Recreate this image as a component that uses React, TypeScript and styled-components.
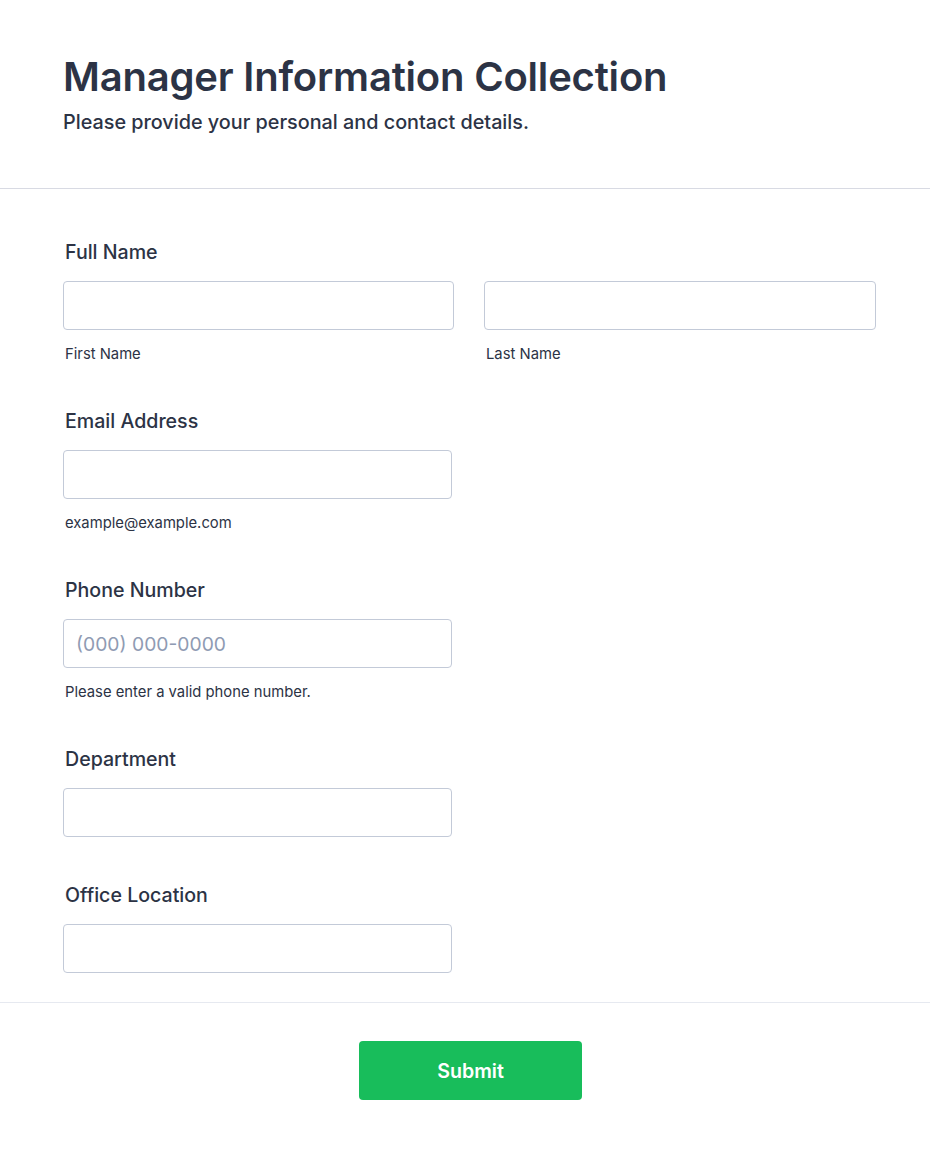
import React from 'react';
import styled, { createGlobalStyle } from 'styled-components';

const GlobalStyle = createGlobalStyle`
  html, body {
    margin: 0;
    padding: 0;
    background: #ffffff;
    font-family: 'Inter', 'Noto Sans', sans-serif;
    color: #2c3345;
  }
  * { box-sizing: border-box; }
`;

const Page = styled.form`
  width: 930px;
  background: #ffffff;
`;

const Header = styled.header`
  padding: 52px 54px 0 63px;
  height: 189px;
  border-bottom: 1px solid #d8dae3;
`;

const Title = styled.h1`
  margin: 0;
  font-size: 40px;
  line-height: 50px;
  font-weight: 600;
  letter-spacing: -0.2px;
  color: #2c3345;
`;

const Subtitle = styled.p`
  margin: 8px 0 0;
  font-size: 19.8px;
  line-height: 24px;
  font-weight: 500;
  color: #2c3345;
`;

const Fields = styled.div`
  padding: 51px 54px 7px 63px;
  display: flex;
  flex-direction: column;
  border-bottom: 1px solid #e6e9f0;
`;

const Field = styled.div`
  display: flex;
  flex-direction: column;
  padding-bottom: 46px;
  &:last-child { padding-bottom: 22px; }
`;

const Label = styled.label`
  padding-left: 2px;
  font-size: 19.6px;
  line-height: 24px;
  font-weight: 500;
  color: #2c3345;
  margin-bottom: 17px;
`;

const Row = styled.div`
  display: grid;
  grid-template-columns: 1fr 1fr;
  column-gap: 30px;
`;

const Single = styled.div<{ $width?: number }>`
  width: ${p => p.$width ?? 389}px;
  display: flex;
  flex-direction: column;
`;

const Input = styled.input`
  height: 49px;
  width: 100%;
  border: 1px solid #c3cad8;
  border-radius: 4px;
  padding: 0 12px;
  font-family: 'Inter', sans-serif;
  font-size: 19.3px;
  color: #2c3345;
  background: #ffffff;
  outline: none;
  &::placeholder { color: #8f9bb3; }
`;

const Sub = styled.span`
  margin-top: 15px;
  padding-left: 2px;
  font-size: 14.8px;
  line-height: 18px;
  color: #2c3345;
`;

const Footer = styled.div`
  padding: 38px 0 49px 11px;
  display: flex;
  justify-content: center;
`;

const SubmitButton = styled.button`
  width: 223px;
  height: 59px;
  border: none;
  border-radius: 4px;
  background: #18bd5b;
  color: #ffffff;
  font-family: 'Inter', sans-serif;
  font-size: 19.6px;
  font-weight: 600;
  cursor: pointer;
`;

const App: React.FC = () => (
  <>
    <GlobalStyle />
    <Page onSubmit={e => e.preventDefault()}>
      <Header>
        <Title>Manager Information Collection</Title>
        <Subtitle>Please provide your personal and contact details.</Subtitle>
      </Header>
      <Fields>
        <Field>
          <Label>Full Name</Label>
          <Row>
            <Single $width={391}>
              <Input type="text" />
              <Sub>First Name</Sub>
            </Single>
            <Single $width={392}>
              <Input type="text" />
              <Sub>Last Name</Sub>
            </Single>
          </Row>
        </Field>
        <Field>
          <Label>Email Address</Label>
          <Single>
            <Input type="email" />
            <Sub>example@example.com</Sub>
          </Single>
        </Field>
        <Field>
          <Label>Phone Number</Label>
          <Single>
            <Input type="tel" placeholder="(000) 000-0000" />
            <Sub>Please enter a valid phone number.</Sub>
          </Single>
        </Field>
        <Field>
          <Label>Department</Label>
          <Single>
            <Input type="text" />
          </Single>
        </Field>
        <Field>
          <Label>Office Location</Label>
          <Single>
            <Input type="text" />
          </Single>
        </Field>
      </Fields>
      <Footer>
        <SubmitButton type="submit">Submit</SubmitButton>
      </Footer>
    </Page>
  </>
);

export default App;
